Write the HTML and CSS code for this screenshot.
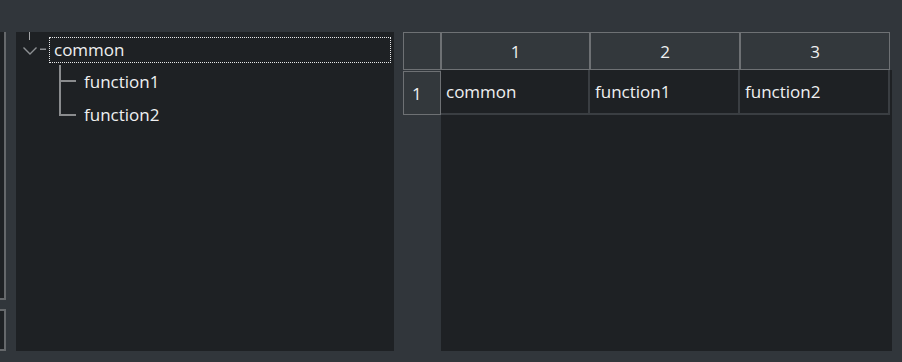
FILE: index.html
```html
<!DOCTYPE html>
<html lang="en">
  <head>
    <meta charset="UTF-8" />
    <title>Tree and Table</title>
    <link rel="stylesheet" href="styles.css">
  </head>
  <body>
    <div class="window">
      <div class="side">
        <div class="side-box top"></div>
        <div class="side-box bottom"></div>
      </div>

      <div class="tree">
        <div class="tree-row">
          <svg class="branch" width="33" height="33" viewBox="0 0 33 33">
            <rect x="13" y="0" width="1" height="8" fill="#a4a6a8" />
            <polyline points="7.5,15.5 14,22 20.5,15.5" fill="none" stroke="#8d9093" stroke-width="1.4" />
            <rect x="24" y="16.5" width="6" height="1.5" fill="#8d9093" />
          </svg>
          <span class="label focused">common</span>
        </div>
        <div class="tree-row child">
          <svg class="branch" width="68" height="33" viewBox="0 0 68 33">
            <rect x="43" y="0" width="2" height="33" fill="#8a8c8e" />
            <rect x="43" y="15" width="17" height="2" fill="#8a8c8e" />
          </svg>
          <span class="label">function1</span>
        </div>
        <div class="tree-row child">
          <svg class="branch" width="68" height="33" viewBox="0 0 68 33">
            <rect x="43" y="0" width="2" height="18" fill="#8a8c8e" />
            <rect x="43" y="16" width="17" height="2" fill="#8a8c8e" />
          </svg>
          <span class="label">function2</span>
        </div>
      </div>

      <div class="table">
        <div class="thead">
          <div class="corner"></div>
          <div class="hcell w1">1</div>
          <div class="hcell w2">2</div>
          <div class="hcell w2">3</div>
        </div>
        <div class="tbody">
          <div class="vhead">
            <div class="vcell">1</div>
          </div>
          <div class="viewport">
            <div class="row">
              <div class="cell w1">common</div>
              <div class="cell w2">function1</div>
              <div class="cell w2">function2</div>
            </div>
          </div>
        </div>
      </div>
    </div>
  </body>
</html>
```

FILE: styles.css
```css
body {
  margin: 0;
  background: #31363b;
  font-family: "Open Sans", "Noto Sans", sans-serif;
  font-size: 17px;
  color: #eff0f1;
  overflow: hidden;
}

.window {
  display: flex;
  width: 902px;
  height: 362px;
  box-sizing: border-box;
  padding: 32px 0 11px 0;
  background: #31363b;
}

/* cut-off widgets on the left */
.side {
  width: 16px;
  display: flex;
  flex-direction: column;
  gap: 9px;
}

.side-box {
  width: 6px;
  box-sizing: border-box;
  background: #1e2124;
  border-right: 2px solid #65686b;
  border-bottom: 2px solid #65686b;
}

.side-box.top {
  height: 268px;
}

.side-box.bottom {
  height: 42px;
  border-top: 2px solid #65686b;
}

/* tree */
.tree {
  width: 378px;
  background: #1e2124;
}

.tree-row {
  display: flex;
  height: 33px;
  align-items: center;
}

.branch {
  display: block;
  flex-shrink: 0;
}

.label {
  line-height: 24px;
}

.tree-row .focused {
  flex: 1;
  margin-right: 3px;
  margin-top: 3px;
  margin-bottom: 1px;
  box-sizing: border-box;
  height: 26px;
  border: 1px dotted #e8e9ea;
  padding-left: 4px;
}

.child .label {
  padding-left: 0;
}

/* table */
.table {
  width: 489px;
  margin-left: 9px;
  display: flex;
  flex-direction: column;
}

.thead {
  display: flex;
  height: 38px;
}

.corner,
.hcell,
.vcell {
  box-sizing: border-box;
  border: 1px solid #6e7174;
  background: #33383c;
}

.corner {
  width: 38px;
}

.hcell {
  display: flex;
  align-items: center;
  justify-content: center;
}

.w1 {
  width: 149px;
}

.w2 {
  width: 150px;
}

.tbody {
  flex: 1;
  display: flex;
}

.vhead {
  width: 38px;
}

.vcell {
  height: 44px;
  margin-top: 1px;
  display: flex;
  align-items: center;
  padding-left: 8px;
}

.viewport {
  flex: 1;
  background: #1e2124;
}

.row {
  display: flex;
  height: 45px;
}

.cell {
  box-sizing: border-box;
  border-right: 2px solid #3a3e42;
  border-bottom: 2px solid #3a3e42;
  display: flex;
  align-items: center;
  padding-left: 5px;
}
```
